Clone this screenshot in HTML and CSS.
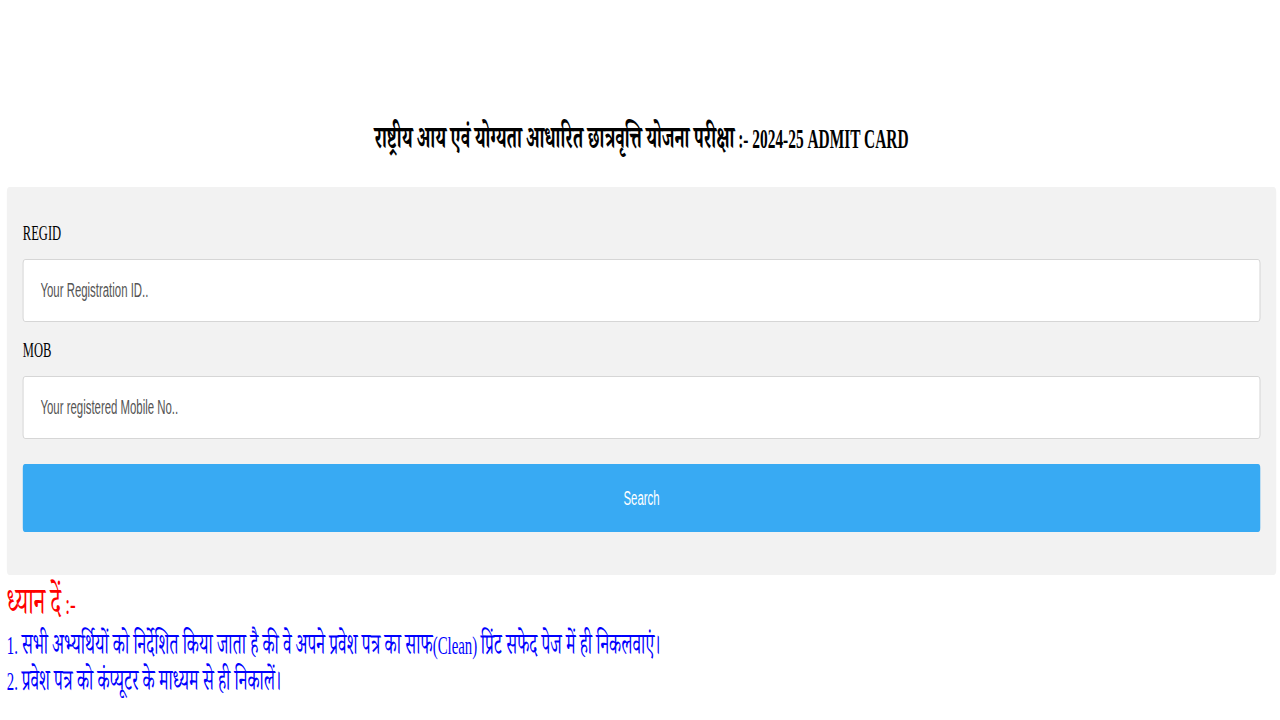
FILE: index.html
```html
<!DOCTYPE html>
<html lang="hi">
<head>
<meta charset="utf-8">
<title>Admit Card</title>
<link rel="stylesheet" href="styles.css">
</head>
<body>
<div class="page">
  <h2 class="title"><span class="dev">राष्ट्रीय आय एवं योग्यता आधारित छात्रवृत्ति योजना परीक्षा</span> :- 2024-25 ADMIT CARD</h2>
  <div class="card">
    <form class="form">
      <label class="label" for="regid">REGID</label>
      <input class="field" id="regid" type="text" placeholder="Your Registration ID..">
      <label class="label" for="mob">MOB</label>
      <input class="field" id="mob" type="text" placeholder="Your registered Mobile No..">
      <button class="btn" type="button">Search</button>
    </form>
  </div>
  <div class="notice">
    <div class="notice-head"><span class="dev">ध्यान दें</span> :-</div>
    <div class="notice-line">1. <span class="dev">सभी अभ्यर्थियों को निर्देशित किया जाता है की वे अपने प्रवेश पत्र का साफ</span>(Clean) <span class="dev">प्रिंट सफेद पेज में ही निकलवाएं।</span></div>
    <div class="notice-line">2. <span class="dev">प्रवेश पत्र को कंप्यूटर के माध्यम से ही निकालें।</span></div>
  </div>
</div>
</body>
</html>
```

FILE: styles.css
```css
html, body {
  margin: 0;
  padding: 0;
  background: #fff;
  overflow: hidden;
}

.page {
  width: 2246px;
  box-sizing: border-box;
  padding: 0 7px 0 12px;
  transform: scaleX(0.57);
  transform-origin: 0 0;
  font-family: "Liberation Serif", "Noto Serif Devanagari", "Noto Sans Devanagari", "Lohit Devanagari", serif;
  color: #000;
}

.title {
  height: 30px;
  margin: 123px 0 34px;
  font-size: 27px;
  line-height: 30px;
  font-weight: bold;
  text-align: center;
}

.title .dev {
  font-size: 1.18em;
  line-height: 30px;
}

.card {
  background: #f2f2f2;
  border-radius: 5px;
  padding: 34px 28px 43px;
}

.form {
  display: flex;
  flex-direction: column;
}

.label {
  font-size: 22px;
  line-height: 24px;
  margin-bottom: 14px;
}

.field {
  height: 63px;
  box-sizing: border-box;
  margin: 0 0 16px;
  padding: 0 30px;
  border: 1px solid #ccc;
  border-radius: 4px;
  background: #fff;
  font-family: "Liberation Sans", Arial, sans-serif;
  font-size: 20px;
  color: #333;
}

.field::placeholder {
  color: #555;
}

.btn {
  margin-top: 9px;
  height: 68px;
  border: none;
  border-radius: 4px;
  background: #38aaf3;
  color: #fff;
  font-family: "Liberation Sans", Arial, sans-serif;
  font-size: 20px;
}

.notice {
  padding-top: 6px;
}

.notice-head {
  height: 45px;
  color: #f00;
  font-size: 30px;
  line-height: 40px;
}

.notice-head .dev {
  font-size: 1.3em;
  line-height: 40px;
}

.notice-line {
  height: 36px;
  color: #00f;
  font-size: 26px;
  line-height: 36px;
  white-space: nowrap;
}

.notice-line .dev {
  font-size: 1.15em;
  line-height: 36px;
}
```
